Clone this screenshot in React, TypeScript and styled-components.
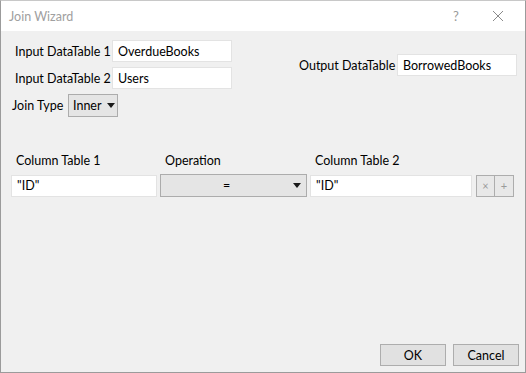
import * as React from 'react';
import styled, { createGlobalStyle } from 'styled-components';

const GlobalStyle = createGlobalStyle`
  html, body {
    margin: 0;
    padding: 0;
    background: #ffffff;
  }
  body {
    font-family: Lato, 'Noto Sans', sans-serif;
    font-size: 12.5px;
    color: #000;
  }
`;

const Window = styled.div`
  box-sizing: border-box;
  width: 526px;
  height: 373px;
  display: flex;
  flex-direction: column;
  border: 1px solid #9b9b9b;
  border-top-color: #c8c8c8;
  background: #f0f0f0;
`;

const TitleBar = styled.div`
  height: 30px;
  flex: none;
  display: flex;
  align-items: center;
  background: #ffffff;
  padding: 0 4px 0 8px;
  color: #a0a0a0;
  font-size: 12.5px;
`;

const Title = styled.span`
  flex: 1;
`;

const TitleButton = styled.span<{ $width: number }>`
  width: ${p => p.$width}px;
  display: flex;
  justify-content: center;
  align-items: center;
  color: #9a9a9a;
  font-size: 13px;
`;

const Body = styled.div`
  flex: 1;
  display: flex;
  flex-direction: column;
  padding: 9px 6px 6px 10px;
`;

const Top = styled.div`
  display: flex;
`;

const LeftColumn = styled.div`
  display: flex;
  flex-direction: column;
  gap: 5px;
`;

const Row = styled.div`
  display: flex;
  align-items: center;
`;

const Label = styled.span<{ $width?: number; $indent?: number }>`
  width: ${p => (p.$width ? `${p.$width}px` : 'auto')};
  padding-left: ${p => p.$indent ?? 0}px;
  box-sizing: border-box;
  white-space: nowrap;
`;

const TextBox = styled.div<{ $width: number }>`
  box-sizing: border-box;
  width: ${p => p.$width}px;
  height: 22px;
  background: #ffffff;
  border: 1px solid #e3e3e3;
  padding-left: 5px;
  display: flex;
  align-items: center;
`;

const Combo = styled.div<{ $width: number }>`
  box-sizing: border-box;
  width: ${p => p.$width}px;
  height: 23px;
  background: #e5e5e5;
  border: 1px solid #acacac;
  display: flex;
  align-items: center;
  padding: 0 5px 0 4px;
  gap: 5px;
`;

const ComboText = styled.span<{ $center?: boolean }>`
  flex: ${p => (p.$center ? 1 : 'none')};
  text-align: ${p => (p.$center ? 'center' : 'left')};
`;

const Arrow = styled.span`
  width: 0;
  height: 0;
  border-left: 4px solid transparent;
  border-right: 4px solid transparent;
  border-top: 5px solid #1a1a1a;
  margin-left: auto;
`;

const RightColumn = styled.div`
  flex: 1;
  display: flex;
  justify-content: flex-end;
  align-items: flex-start;
  padding-top: 14px;
  padding-right: 2px;
`;

const Headers = styled.div`
  display: flex;
  margin-top: 35px;
  height: 16px;
  align-items: center;
`;

const Header = styled.span<{ $width: number }>`
  width: ${p => p.$width}px;
  padding-left: 5px;
  box-sizing: border-box;
`;

const JoinRow = styled.div`
  display: flex;
  align-items: center;
  gap: 3px;
  margin-top: 6px;
`;

const SmallButtons = styled.div`
  display: flex;
  margin-left: 1px;
`;

const SmallButton = styled.div`
  box-sizing: border-box;
  width: 19px;
  height: 22px;
  border: 1px solid #adadad;
  background: #e8e8e8;
  color: #9a9a9a;
  display: flex;
  align-items: center;
  justify-content: center;
  font-size: 11px;
  & + & {
    border-left: none;
  }
`;

const Footer = styled.div`
  margin-top: auto;
  display: flex;
  justify-content: flex-end;
  gap: 7px;
`;

const Button = styled.div`
  box-sizing: border-box;
  width: 66px;
  height: 22px;
  border: 1px solid #adadad;
  background: #e1e1e1;
  display: flex;
  align-items: center;
  justify-content: center;
`;

const CloseIcon = () => (
  <svg width="12" height="12" viewBox="0 0 12 12">
    <path d="M1 1 L11 11 M11 1 L1 11" stroke="#8a8a8a" strokeWidth="1" />
  </svg>
);

export default function App() {
  return (
    <>
      <GlobalStyle />
      <Window>
        <TitleBar>
          <Title>Join Wizard</Title>
          <TitleButton $width={38}>?</TitleButton>
          <TitleButton $width={46}>
            <CloseIcon />
          </TitleButton>
        </TitleBar>
        <Body>
          <Top>
            <LeftColumn>
              <Row>
                <Label $width={101} $indent={4}>Input DataTable 1</Label>
                <TextBox $width={120}>OverdueBooks</TextBox>
              </Row>
              <Row>
                <Label $width={101} $indent={4}>Input DataTable 2</Label>
                <TextBox $width={120}>Users</TextBox>
              </Row>
              <Row>
                <Label $width={57} $indent={1}>Join Type</Label>
                <Combo $width={50}>
                  <ComboText>Inner</ComboText>
                  <Arrow />
                </Combo>
              </Row>
            </LeftColumn>
            <RightColumn>
              <Row>
                <Label $width={98}>Output DataTable</Label>
                <TextBox $width={120}>BorrowedBooks</TextBox>
              </Row>
            </RightColumn>
          </Top>
          <Headers>
            <Header $width={149}>Column Table 1</Header>
            <Header $width={150}>Operation</Header>
            <Header $width={160}>Column Table 2</Header>
          </Headers>
          <JoinRow>
            <TextBox $width={146}>"ID"</TextBox>
            <Combo $width={147}>
              <ComboText $center>=</ComboText>
              <Arrow />
            </Combo>
            <TextBox $width={162}>"ID"</TextBox>
            <SmallButtons>
              <SmallButton>×</SmallButton>
              <SmallButton>+</SmallButton>
            </SmallButtons>
          </JoinRow>
          <Footer>
            <Button>OK</Button>
            <Button>Cancel</Button>
          </Footer>
        </Body>
      </Window>
    </>
  );
}
